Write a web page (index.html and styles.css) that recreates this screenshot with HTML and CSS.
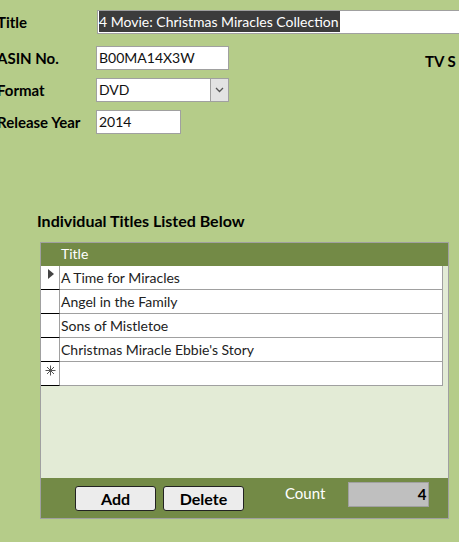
FILE: index.html
```html
<!DOCTYPE html>
<html lang="en">
  <head>
    <meta charset="UTF-8" />
    <meta name="viewport" content="width=device-width, initial-scale=1.0" />
    <title>Movie Collection</title>
    <link rel="stylesheet" href="styles.css">
  </head>
  <body>
    <div class="form">
      <div class="row row-title">
        <span class="label">Title</span>
        <div class="field field-title"><span class="sel">4 Movie: Christmas Miracles Collection</span></div>
      </div>
      <div class="row">
        <span class="label">ASIN No.</span>
        <div class="field field-asin">B00MA14X3W</div>
        <span class="label tv">TV S</span>
      </div>
      <div class="row">
        <span class="label">Format</span>
        <div class="field field-select">
          <span class="value">DVD</span>
          <span class="drop">
            <svg width="9" height="6" viewBox="0 0 9 6"><path d="M1 1 L4.5 4.5 L8 1" fill="none" stroke="#555" stroke-width="1.3"/></svg>
          </span>
        </div>
      </div>
      <div class="row">
        <span class="label">Release Year</span>
        <div class="field field-year">2014</div>
      </div>
    </div>

    <h3 class="list-heading">Individual Titles Listed Below</h3>

    <div class="subform">
      <div class="grid-header"><span>Title</span></div>
      <div class="grid-row">
        <div class="selector"><span class="pointer"></span></div>
        <div class="cell">A Time for Miracles</div>
      </div>
      <div class="grid-row">
        <div class="selector"></div>
        <div class="cell">Angel in the Family</div>
      </div>
      <div class="grid-row">
        <div class="selector"></div>
        <div class="cell">Sons of Mistletoe</div>
      </div>
      <div class="grid-row">
        <div class="selector"></div>
        <div class="cell">Christmas Miracle Ebbie's Story</div>
      </div>
      <div class="grid-row">
        <div class="selector new">
          <svg width="11" height="11" viewBox="0 0 11 11"><path d="M5.5 0.5 V10.5 M0.5 5.5 H10.5 M2 2 L9 9 M9 2 L2 9" stroke="#555" stroke-width="1"/></svg>
        </div>
        <div class="cell"></div>
      </div>
      <div class="panel"></div>
      <div class="footer">
        <button class="btn btn-add">Add</button>
        <button class="btn">Delete</button>
        <span class="count-label">Count</span>
        <div class="count-box">4</div>
      </div>
    </div>
  </body>
</html>
```

FILE: styles.css
```css
body {
  margin: 0;
  padding: 0;
  background: #b5cc89;
  font-family: Lato, "Open Sans", sans-serif;
  color: #000;
  overflow: hidden;
  height: 542px;
}
.form {
  padding-top: 10px;
}
.row {
  display: flex;
  align-items: center;
  height: 24px;
  margin-top: 8px;
}
.row-title {
  margin-top: 0;
  margin-bottom: 12px;
}
.label {
  width: 99px;
  margin-left: -3px;
  font-weight: bold;
  font-size: 15px;
  flex-shrink: 0;
  white-space: nowrap;
}
.field {
  box-sizing: border-box;
  height: 24px;
  background: #fff;
  border: 1px solid #a0a0a0;
  font-size: 14px;
  line-height: 22px;
  padding: 0 2px;
  white-space: nowrap;
  flex-shrink: 0;
  color: #111;
}
.field-title {
  width: 380px;
  margin-left: 1px;
  padding: 0 0 0 1px;
}
.sel {
  display: inline-block;
  background: #3c3c3c;
  color: #fff;
  line-height: 21px;
  padding-right: 1px;
}
.field-asin {
  width: 133px;
}
.tv {
  width: auto;
  margin-left: 196px;
  margin-top: 5px;
  font-size: 15px;
}
.field-select {
  width: 133px;
  display: flex;
  justify-content: space-between;
  padding-right: 0;
}
.drop {
  width: 17px;
  height: 22px;
  background: #e3e3e3;
  border-left: 1px solid #a0a0a0;
  display: flex;
  align-items: center;
  justify-content: center;
}
.field-year {
  width: 85px;
}
.list-heading {
  margin: 77px 0 0 37px;
  font-size: 16px;
  line-height: 19px;
}
.subform {
  margin: 12px 0 0 40px;
  width: 409px;
  box-sizing: border-box;
  border: 1px solid #a0a0a0;
  background: #e3ebd6;
}
.grid-header {
  height: 23px;
  background: #738a46;
  color: #fff;
  font-size: 14px;
  line-height: 21px;
  padding-left: 20px;
}
.grid-row {
  display: flex;
  height: 24px;
  width: 402px;
  background: #fff;
}
.selector {
  box-sizing: border-box;
  width: 19px;
  border-bottom: 1px solid #000;
  border-right: 1px solid #a0a0a0;
  position: relative;
}
.pointer {
  position: absolute;
  left: 7px;
  top: 3px;
  border-left: 6px solid #444;
  border-top: 5px solid transparent;
  border-bottom: 5px solid transparent;
}
.new {
  display: flex;
  justify-content: center;
  padding-top: 3px;
}
.cell {
  box-sizing: border-box;
  flex: 1;
  border-bottom: 1px solid #a0a0a0;
  border-right: 1px solid #a0a0a0;
  font-size: 14px;
  line-height: 23px;
  padding-left: 1px;
  color: #222;
}
.panel {
  height: 92px;
}
.footer {
  height: 40px;
  background: #738a46;
  display: flex;
  align-items: flex-start;
  padding-left: 34px;
  box-sizing: border-box;
}
.btn {
  margin-top: 8px;
  width: 81px;
  height: 25px;
  background: #ececec;
  border: 1px solid #222;
  border-radius: 3px;
  font-family: Lato, "Open Sans", sans-serif;
  font-weight: bold;
  font-size: 16px;
  padding: 0;
  margin-right: 7px;
}
.count-label {
  color: #fff;
  font-size: 15px;
  margin: 6px 0 0 34px;
}
.count-box {
  box-sizing: border-box;
  margin: 4px 0 0 23px;
  width: 81px;
  height: 25px;
  background: #bfbfbf;
  border: 1px solid #a0a0a0;
  text-align: right;
  font-weight: bold;
  font-size: 15px;
  line-height: 23px;
  padding-right: 2px;
}
```
